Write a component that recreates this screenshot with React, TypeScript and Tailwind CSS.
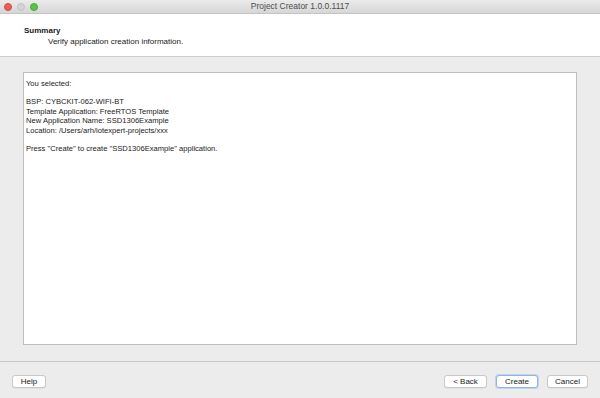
export default function App() {
  const font = { fontFamily: '"Liberation Sans", Arial, sans-serif' };
  return (
    <div
      className="w-[600px] h-[398px] flex flex-col bg-[#ececec] text-[#1a1a1a] overflow-hidden"
      style={font}
    >
      {/* title bar */}
      <div className="relative h-[14px] flex items-center bg-gradient-to-b from-[#ebebeb] to-[#d6d6d6] border-b border-[#c4c4c4]">
        <div className="flex items-center gap-[5px] pl-[4px]">
          <span className="w-[8px] h-[8px] rounded-full bg-[#ee5d55] border border-[#d8473f]" />
          <span className="w-[8px] h-[8px] rounded-full bg-[#d4d4d4] border border-[#c2c2c2]" />
          <span className="w-[8px] h-[8px] rounded-full bg-[#59c34a] border border-[#46a838]" />
        </div>
        <div className="absolute inset-0 flex items-center justify-center text-[8.5px] text-[#4d4d4d]">
          Project Creator 1.0.0.1117
        </div>
      </div>

      {/* header */}
      <div className="h-[43px] bg-white border-b border-[#cfcfcf] flex flex-col pl-[24px] pt-[11px] text-[8px] leading-[11px]">
        <div className="font-bold">Summary</div>
        <div className="pl-[24px]">Verify application creation information.</div>
      </div>

      {/* body */}
      <div className="flex-1 flex flex-col pt-[15px] px-[23px] pb-[16px]">
        <div className="flex-1 bg-white border border-[#bdbdbd] px-[2px] pt-[5.5px] text-[7.6px] leading-[9.4px]">
          <div>You selected:</div>
          <div className="h-[9.4px]" />
          <div>BSP: CYBCKIT-062-WIFI-BT</div>
          <div>Template Application: FreeRTOS Template</div>
          <div>New Application Name: SSD1306Example</div>
          <div>Location: /Users/arh/iotexpert-projects/xxx</div>
          <div className="h-[9.4px]" />
          <div>Press "Create" to create "SSD1306Example" application.</div>
        </div>
      </div>

      {/* footer */}
      <div className="h-[37px] border-t border-[#c6c6c6] flex items-start justify-between pt-[13px] pl-[12px] pr-[12px] text-[8px]">
        <button className="w-[34px] h-[13px] bg-white border border-[#c9c9c9] rounded-[3px] leading-none shadow-[0_0.5px_0.5px_rgba(0,0,0,0.1)]">
          Help
        </button>
        <div className="flex gap-[9px]">
          <button className="w-[43px] h-[13px] bg-white border border-[#c9c9c9] rounded-[3px] leading-none shadow-[0_0.5px_0.5px_rgba(0,0,0,0.1)]">
            &lt; Back
          </button>
          <button className="w-[42px] h-[13px] bg-white border border-[#8fb4e6] rounded-[3px] leading-none shadow-[0_0_0_1px_rgba(120,165,230,0.35)]">
            Create
          </button>
          <button className="w-[41px] h-[13px] bg-white border border-[#c9c9c9] rounded-[3px] leading-none shadow-[0_0.5px_0.5px_rgba(0,0,0,0.1)]">
            Cancel
          </button>
        </div>
      </div>
    </div>
  );
}
